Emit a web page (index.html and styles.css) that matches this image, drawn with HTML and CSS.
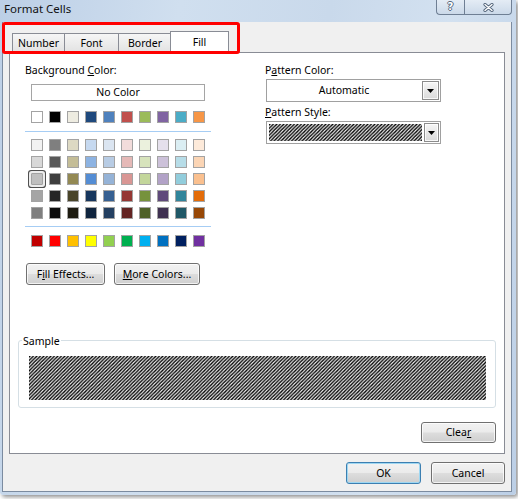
FILE: index.html
```html
<!DOCTYPE html>
<html>
<head>
<meta charset="utf-8">
<title>Format Cells</title>
<link rel="stylesheet" href="styles.css">
</head>
<body>
<div class="window">
  <div class="titlebar">
    <span class="title">Format Cells</span>
    <div class="caps">
      <div class="cap help"><span class="help-glyph">?</span></div>
      <div class="cap close">
        <svg width="11" height="9" viewBox="0 0 11 9"><path d="M2 1.5 L9 7.5 M9 1.5 L2 7.5" stroke="#52647a" stroke-width="3.2" stroke-linecap="round"/><path d="M2 1.5 L9 7.5 M9 1.5 L2 7.5" stroke="#ffffff" stroke-width="1.4" stroke-linecap="round"/></svg>
      </div>
    </div>
  </div>
  <div class="client">
    <div class="highlight"></div>
    <div class="tabs">
      <div class="tab t-number">Number</div>
      <div class="tab t-font">Font</div>
      <div class="tab t-border">Border</div>
      <div class="tab t-fill">Fill</div>
    </div>
    <div class="panel">
      <div class="cols">
        <div class="bg-col">
          <div class="label">Background <u>C</u>olor:</div>
          <div class="nocolor">No Color</div>
          <div class="swrow">
            <div class="sw" style="background:#ffffff"></div>
            <div class="sw" style="background:#000000"></div>
            <div class="sw" style="background:#eeece1"></div>
            <div class="sw" style="background:#1f497d"></div>
            <div class="sw" style="background:#4f81bd"></div>
            <div class="sw" style="background:#c0504d"></div>
            <div class="sw" style="background:#9bbb59"></div>
            <div class="sw" style="background:#8064a2"></div>
            <div class="sw" style="background:#4bacc6"></div>
            <div class="sw" style="background:#f79646"></div>
          </div>
          <div class="sep"></div>
          <div class="swgrid">
            <div class="sw" style="background:#f2f2f2"></div>
            <div class="sw" style="background:#7f7f7f"></div>
            <div class="sw" style="background:#ddd9c3"></div>
            <div class="sw" style="background:#c6d9f0"></div>
            <div class="sw" style="background:#dbe5f1"></div>
            <div class="sw" style="background:#f2dcdb"></div>
            <div class="sw" style="background:#ebf1dd"></div>
            <div class="sw" style="background:#e5e0ec"></div>
            <div class="sw" style="background:#dbeef3"></div>
            <div class="sw" style="background:#fdeada"></div>

            <div class="sw" style="background:#d8d8d8"></div>
            <div class="sw" style="background:#595959"></div>
            <div class="sw" style="background:#c4bd97"></div>
            <div class="sw" style="background:#8db3e2"></div>
            <div class="sw" style="background:#b8cce4"></div>
            <div class="sw" style="background:#e5b9b7"></div>
            <div class="sw" style="background:#d7e3bc"></div>
            <div class="sw" style="background:#ccc1d9"></div>
            <div class="sw" style="background:#b7dde8"></div>
            <div class="sw" style="background:#fbd5b5"></div>

            <div class="sw sel" style="background:#bfbfbf"></div>
            <div class="sw" style="background:#3f3f3f"></div>
            <div class="sw" style="background:#938953"></div>
            <div class="sw" style="background:#548dd4"></div>
            <div class="sw" style="background:#95b3d7"></div>
            <div class="sw" style="background:#d99694"></div>
            <div class="sw" style="background:#c3d69b"></div>
            <div class="sw" style="background:#b2a2c7"></div>
            <div class="sw" style="background:#92cddc"></div>
            <div class="sw" style="background:#fac08f"></div>

            <div class="sw" style="background:#a5a5a5"></div>
            <div class="sw" style="background:#262626"></div>
            <div class="sw" style="background:#494429"></div>
            <div class="sw" style="background:#17365d"></div>
            <div class="sw" style="background:#366092"></div>
            <div class="sw" style="background:#953734"></div>
            <div class="sw" style="background:#76923c"></div>
            <div class="sw" style="background:#5f497a"></div>
            <div class="sw" style="background:#31859b"></div>
            <div class="sw" style="background:#e36c09"></div>

            <div class="sw" style="background:#7f7f7f"></div>
            <div class="sw" style="background:#0c0c0c"></div>
            <div class="sw" style="background:#1d1b10"></div>
            <div class="sw" style="background:#0f243e"></div>
            <div class="sw" style="background:#244061"></div>
            <div class="sw" style="background:#632423"></div>
            <div class="sw" style="background:#4f6128"></div>
            <div class="sw" style="background:#3f3151"></div>
            <div class="sw" style="background:#205867"></div>
            <div class="sw" style="background:#974806"></div>
          </div>
          <div class="sep"></div>
          <div class="swrow">
            <div class="sw" style="background:#c00000"></div>
            <div class="sw" style="background:#ff0000"></div>
            <div class="sw" style="background:#ffc000"></div>
            <div class="sw" style="background:#ffff00"></div>
            <div class="sw" style="background:#92d050"></div>
            <div class="sw" style="background:#00b050"></div>
            <div class="sw" style="background:#00b0f0"></div>
            <div class="sw" style="background:#0070c0"></div>
            <div class="sw" style="background:#002060"></div>
            <div class="sw" style="background:#7030a0"></div>
          </div>
          <div class="btnrow">
            <button class="btn b-fill">F<u>i</u>ll Effects...</button>
            <button class="btn b-more"><u>M</u>ore Colors...</button>
          </div>
        </div>
        <div class="pat-col">
          <div class="label">P<u>a</u>ttern Color:</div>
          <div class="combo">
            <span class="combo-text">Automatic</span>
            <span class="combo-arrow"><svg width="7" height="4" viewBox="0 0 7 4"><path d="M0 0 H7 L3.5 4 Z" fill="#000"/></svg></span>
          </div>
          <div class="label label2"><u>P</u>attern Style:</div>
          <div class="combo">
            <span class="combo-pattern">
              <svg class="stripes" width="153" height="17">
                <defs>
                  <pattern id="diag1" width="3.5" height="3.5" patternUnits="userSpaceOnUse">
                    <polygon points="0,0 1.9,0 0,1.9" fill="#000"/>
                    <polygon points="0,3.5 3.5,0 3.5,1.9 1.9,3.5" fill="#000"/>
                  </pattern>
                </defs>
                <rect width="153" height="17" fill="#fff"/>
                <rect width="153" height="17" fill="url(#diag1)"/>
              </svg>
            </span>
            <span class="combo-arrow"><svg width="7" height="4" viewBox="0 0 7 4"><path d="M0 0 H7 L3.5 4 Z" fill="#000"/></svg></span>
          </div>
        </div>
      </div>
      <div class="sample">
        <span class="sample-label">Sample</span>
        <svg class="sample-fill" width="457" height="44">
          <defs>
            <pattern id="diag2" width="3.5" height="3.5" patternUnits="userSpaceOnUse">
              <polygon points="0,0 1.9,0 0,1.9" fill="#000"/>
              <polygon points="0,3.5 3.5,0 3.5,1.9 1.9,3.5" fill="#000"/>
            </pattern>
          </defs>
          <rect width="457" height="44" fill="#fff"/>
          <rect width="457" height="44" fill="url(#diag2)"/>
        </svg>
      </div>
      <div class="clear-row">
        <button class="btn b-clear">Clea<u>r</u></button>
      </div>
    </div>
    <div class="footer">
      <button class="btn b-ok">OK</button>
      <button class="btn b-cancel">Cancel</button>
    </div>
  </div>
</div>
</body>
</html>
```

FILE: styles.css
```css
html, body {
  margin: 0;
  padding: 0;
}

body {
  width: 518px;
  height: 499px;
  background: #ffffff;
  font-family: "Noto Sans", "Open Sans", sans-serif;
  font-size: 10.5px;
  color: #000;
  overflow: hidden;
}

u {
  text-decoration: underline;
  text-underline-offset: 1px;
}

.window {
  width: 516px;
  height: 495px;
  box-sizing: border-box;
  padding: 0 4px 3px 2px;
  display: flex;
  flex-direction: column;
  background: linear-gradient(100deg, #bccfe6 0%, #d0dfef 30%, #c9d9eb 55%, #d3e1f0 75%, #bccfe6 100%);
  box-shadow: 2px 2px 4px rgba(0, 0, 0, 0.45);
  border-radius: 0 0 3px 3px;
}

/* Title bar */
.titlebar {
  height: 22px;
  flex: none;
  display: flex;
  justify-content: space-between;
  align-items: flex-start;
  padding-left: 2px;
}

.title {
  font-size: 11.5px;
  line-height: 18px;
  color: #111;
}

.caps {
  display: flex;
}

.cap {
  height: 15px;
  box-sizing: border-box;
  border: 1px solid #6f7f94;
  border-top: none;
  background: linear-gradient(#e4ecf5, #cbd9e9);
  display: flex;
  align-items: center;
  justify-content: center;
}

.help {
  width: 28px;
  border-right: none;
  border-radius: 0 0 0 4px;
}

.close {
  width: 48px;
  border-radius: 0 0 4px 0;
}

.help-glyph {
  font-family: "DejaVu Sans", sans-serif;
  font-weight: bold;
  font-size: 10px;
  line-height: 12px;
  color: #fff;
  text-shadow: 1px 0 0 #55677d, -1px 0 0 #55677d, 0 1px 0 #55677d, 0 -1px 0 #55677d;
}

/* Client area */
.client {
  position: relative;
  width: 508px;
  height: 469px;
  border: 1px solid #7b8ba0;
  border-top: none;
  background: #f0f0f0;
}

.highlight {
  position: absolute;
  left: -1px;
  top: 0;
  width: 238px;
  height: 32px;
  box-sizing: border-box;
  border: 3px solid #ff0000;
  border-radius: 3px;
  z-index: 5;
}

/* Tabs */
.tabs {
  display: flex;
  align-items: flex-end;
  height: 21px;
  margin: 9px 0 0 9px;
}

.tab {
  height: 19px;
  box-sizing: border-box;
  border: 1px solid #898c95;
  border-bottom: none;
  background: linear-gradient(#f6f6f6, #e2e2e2);
  text-align: center;
  line-height: 18px;
  margin-right: -1px;
}

.t-number { width: 53px; }
.t-font { width: 55px; }
.t-border { width: 54px; }

.t-fill {
  width: 59px;
  height: 22px;
  margin-left: -1px;
  margin-bottom: -1px;
  line-height: 20px;
  background: #fff;
  position: relative;
  z-index: 1;
}

/* Panel */
.panel {
  margin-left: 6px;
  width: 496px;
  box-sizing: border-box;
  border: 1px solid #898c95;
  background: #fff;
  padding-bottom: 10px;
}

.cols {
  display: flex;
}

.bg-col {
  margin-left: 15px;
  width: 186px;
}

.pat-col {
  margin-left: 54px;
  width: 176px;
}

.label {
  margin-top: 10px;
  line-height: 15px;
  white-space: nowrap;
}

.label2 {
  margin-top: 3px;
}

.nocolor {
  margin: 6px 0 0 6px;
  width: 174px;
  height: 17px;
  box-sizing: border-box;
  border: 1px solid #a5a5a5;
  text-align: center;
  line-height: 15px;
}

.swrow {
  display: flex;
  gap: 6px;
  padding-left: 6px;
  margin-top: 10px;
}

.swgrid {
  display: grid;
  grid-template-columns: repeat(10, 12px);
  column-gap: 6px;
  row-gap: 5px;
  padding-left: 6px;
  margin-top: 7px;
}

.sep + .swrow {
  margin-top: 8px;
}

.sw {
  width: 12px;
  height: 12px;
  box-sizing: border-box;
  border: 1px solid #a3a3a3;
}

.sw.sel {
  border-radius: 1px;
  box-shadow: 0 0 0 2px #ececec, 0 0 0 3px #505050;
}

.sep {
  height: 1px;
  background: #a6cdf4;
  margin-top: 8px;
}

.swgrid + .sep {
  margin-top: 7px;
}

.btnrow {
  display: flex;
  gap: 9px;
  margin-top: 16px;
  padding-left: 1px;
}

/* Buttons */
.btn {
  font: inherit;
  color: #000;
  height: 22px;
  box-sizing: border-box;
  padding: 0;
  margin: 0;
  border: 1px solid #707070;
  border-radius: 3px;
  background: linear-gradient(#f2f2f2 0%, #ebebeb 48%, #dddddd 52%, #cfcfcf 100%);
  box-shadow: inset 0 0 0 1px rgba(255, 255, 255, 0.75);
  line-height: 20px;
  text-align: center;
  white-space: nowrap;
}

.b-fill { width: 79px; }
.b-more { width: 86px; }

.b-clear {
  width: 75px;
  height: 21px;
  line-height: 19px;
}

.b-ok {
  width: 75px;
  border-color: #3c7fb1;
  box-shadow: inset 0 0 0 1px #9ed7f2;
}

.b-cancel { width: 74px; }

/* Combo boxes */
.combo {
  margin: 1px 0 0 1px;
  width: 175px;
  height: 23px;
  box-sizing: border-box;
  border: 1px solid #a0a0a0;
  background: #fff;
  display: flex;
}

.combo-text {
  flex: 1;
  text-align: center;
  line-height: 21px;
}

.combo-pattern {
  flex: 1;
  padding: 2px 1px 2px 2px;
}

.stripes {
  display: block;
}

.combo-arrow {
  width: 17px;
  height: 19px;
  margin: 1px;
  box-sizing: border-box;
  border: 1px solid #8c8c8c;
  background: linear-gradient(#f6f6f6, #dadada);
  box-shadow: inset 0 0 0 1px rgba(255, 255, 255, 0.8);
  display: flex;
  align-items: center;
  justify-content: center;
}

/* Sample */
.sample {
  position: relative;
  margin: 55px 8px 0;
  border: 1px solid #d5dfe5;
  border-radius: 3px;
  padding: 15px 9px 7px 10px;
}

.sample-label {
  position: absolute;
  top: -7px;
  left: 3px;
  padding: 0 1px;
  background: #fff;
  line-height: 15px;
}

.sample-fill {
  display: block;
}

.clear-row {
  display: flex;
  justify-content: flex-end;
  margin-top: 14px;
  padding-right: 8px;
}

/* Footer */
.footer {
  display: flex;
  justify-content: flex-end;
  gap: 10px;
  margin-top: 8px;
  padding-right: 6px;
}
```
